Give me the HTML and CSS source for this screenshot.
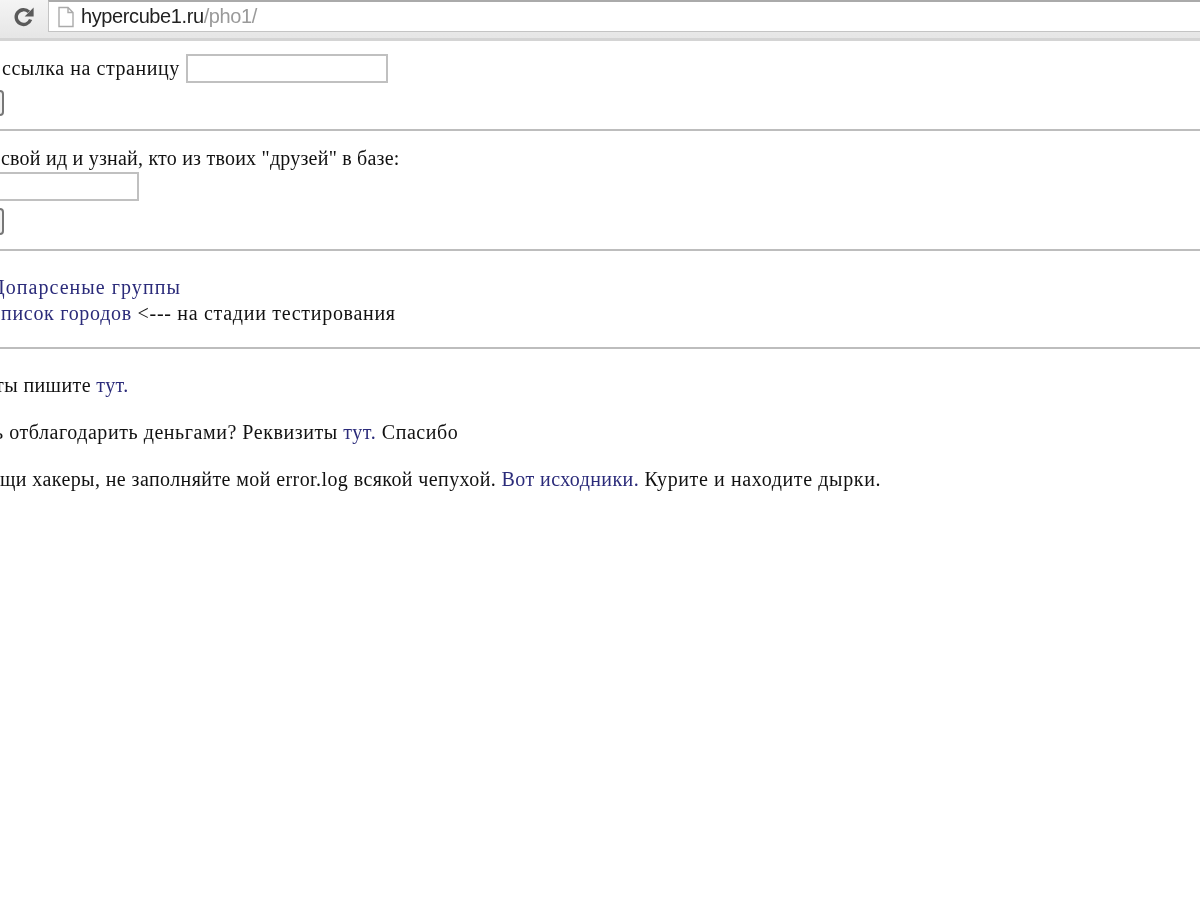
FILE: index.html
```html
<!DOCTYPE html>
<html lang="ru">
<head>
<meta charset="utf-8">
<title>hypercube1.ru/pho1/</title>
<link rel="stylesheet" href="styles.css">
</head>
<body>
<header class="toolbar">
  <svg class="reload" width="24" height="24" viewBox="0 0 24 24"><path d="M18.6 14.5a7.4 7.4 0 1 1-1.7-7.6" fill="none" stroke="#5a5a5a" stroke-width="3.4"/><path d="M21.6 2.6v9h-9z" fill="#5a5a5a"/></svg>
  <div class="omnibox">
    <svg class="page-icon" width="18" height="22" viewBox="0 0 18 22"><path d="M2 1.5h9l5 5v14H2z M11 1.5v5h5" fill="#fff" stroke="#aaa" stroke-width="1.4"/></svg>
    <span class="host">hypercube1.ru</span><span class="path">/pho1/</span>
  </div>
</header>
<main class="page">
  <section class="block first">
    <div class="row">ссылка на страницу <input class="field wide" type="text"></div>
    <button class="btn" type="button"></button>
  </section>
  <hr class="rule">
  <section class="block second">
    <div class="row tight">свой ид и узнай, кто из твоих "друзей" в базе:</div>
    <input class="field narrow" type="text">
    <button class="btn btn-low" type="button"></button>
  </section>
  <hr class="rule">
  <section class="block third">
    <div class="line clip-a"><a class="link" href="#">Допарсеные группы</a></div>
    <div class="line clip-b"><a class="link" href="#">Список городов</a> &lt;--- на стадии тестирования</div>
  </section>
  <hr class="rule">
  <section class="block fourth">
    <p class="para shift-a">ты пишите <a class="link" href="#">тут.</a></p>
    <p class="para shift-b">ь отблагодарить деньгами? Реквизиты <a class="link" href="#">тут.</a> Спасибо</p>
    <p class="para shift-c">щи хакеры, не заполняйте мой error.log всякой чепухой. <a class="link" href="#">Вот исходники.</a> <span class="tail">Курите и находите дырки.</span></p>
  </section>
</main>
</body>
</html>
```
FILE: styles.css
```css
html, body { margin: 0; padding: 0; background: #fff; overflow: hidden; height: 100%; }
body { font-family: "Liberation Serif", "Times New Roman", serif; font-size: 20px; letter-spacing: 0.55px; color: #111; }
.toolbar { height: 38px; display: flex; align-items: flex-start; background: linear-gradient(#f4f4f4, #e6e6e6); border-bottom: 3px solid #d4d4d4; filter: blur(0.5px); }
.reload { margin: 5px 0 0 12px; flex: none; }
.omnibox { margin: 0 0 0 12px; flex: 1; height: 32px; background: #fff; border: 1px solid #c4c4c4; border-top: 2px solid #aaa; border-right: 0; box-sizing: border-box; display: flex; align-items: center; padding-left: 8px; font-family: "Liberation Sans", Arial, sans-serif; font-size: 20px; letter-spacing: -0.4px; }
.page-icon { margin-right: 6px; flex: none; }
.host { color: #222; }
.path { color: #9a9a9a; }
.page { filter: blur(0.4px); }
.block { box-sizing: border-box; }
.first { height: 88px; padding-top: 13px; }
.second { height: 118px; padding-top: 13px; }
.third { height: 96px; padding-top: 23px; }
.fourth { padding-top: 26px; }
.row { height: 28px; line-height: 28px; padding-left: 1px; }
.first .row { height: 30px; padding-left: 2px; }
.tight { letter-spacing: 0.22px; }
.line { height: 26px; line-height: 26px; }
.clip-a { margin-left: -9px; letter-spacing: 1.05px; }
.clip-b { margin-left: -13px; letter-spacing: 0.7px; }
.para { margin: 0 0 26px; line-height: 21px; }
.shift-a { margin-left: -5px; letter-spacing: 0.4px; }
.shift-b { margin-left: -6px; }
.shift-c { letter-spacing: 0.41px; }
.tail { letter-spacing: 0.62px; }
.rule { height: 2px; margin: 0; border: 0; background: #bdbdbd; }
.field { display: inline-block; box-sizing: border-box; height: 29px; padding: 0; border: 2px solid #c0c0c0; background: #fff; vertical-align: middle; }
.wide { width: 202px; margin: 0 0 3px 1px; }
.narrow { width: 199px; display: block; margin-left: -60px; }
.btn { display: block; width: 64px; height: 26px; margin: 6px 0 0 -60px; padding: 0; background: #f2f2f2; border: 2px solid #777; border-radius: 4px; }
.btn-low { margin-top: 7px; height: 27px; }
.link { color: #2b2b7a; text-decoration: none; }
```
